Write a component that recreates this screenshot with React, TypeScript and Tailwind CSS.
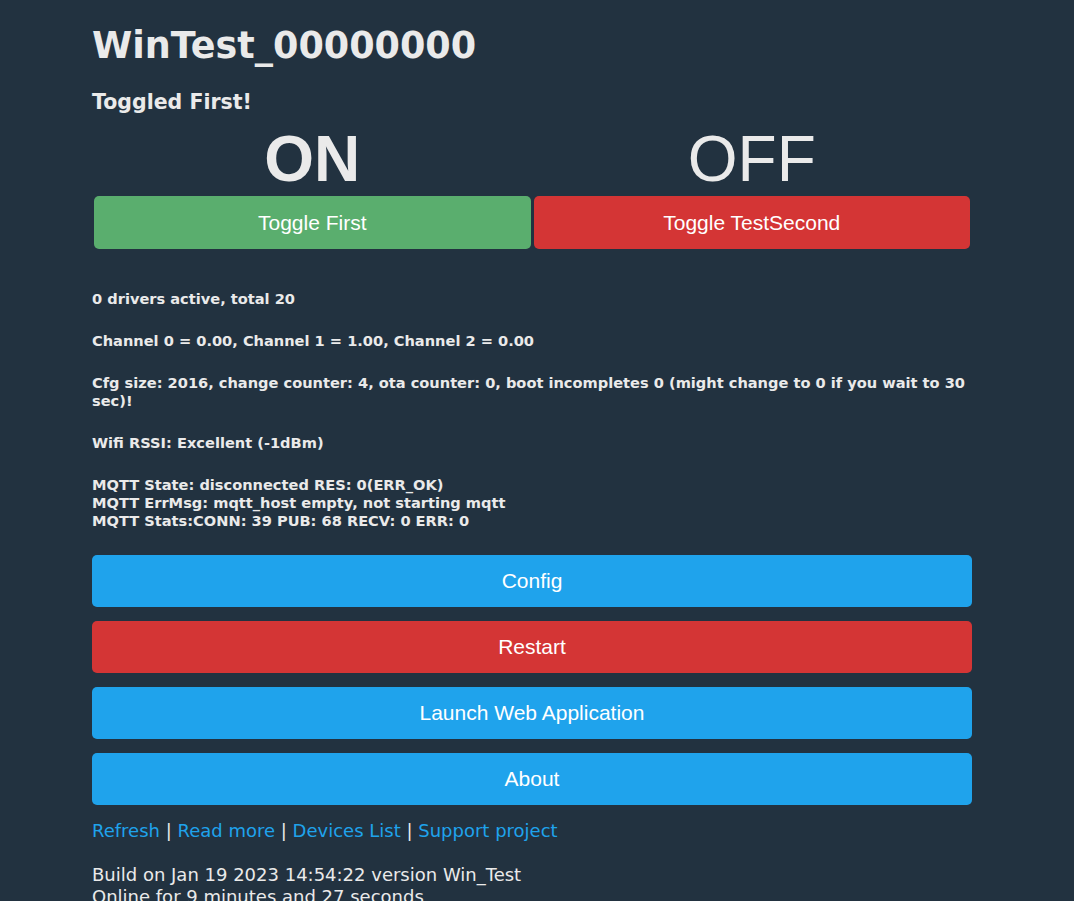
import React from "react";

const VERDANA = "font-['DejaVu_Sans',Verdana,sans-serif]";
const ARIAL = "font-['Liberation_Sans',Arial,sans-serif]";

function BigButton({ label, tone }: { label: string; tone: "blue" | "red" }) {
  return (
    <button
      type="button"
      className={`${ARIAL} flex h-[52px] w-full items-center justify-center rounded-[5px] text-[21px] text-white ${
        tone === "blue" ? "bg-[#1fa3ec]" : "bg-[#d43535]"
      }`}
    >
      {label}
    </button>
  );
}

export default function App() {
  return (
    <div className={`${VERDANA} min-h-screen bg-[#223240] text-[#eaeaea]`}>
      <div className="ml-[92px] w-[880px] pt-[24px]">
        <h1 className="text-[36.5px] leading-[44px] font-bold">WinTest_00000000</h1>

        <h3 className="mt-[22px] text-[20.5px] leading-[24px] font-bold">Toggled First!</h3>

        <div className="mt-[11px] grid grid-cols-2 gap-[3px] px-[2px]">
          <div className={`${ARIAL} text-center text-[64px] leading-[68px] font-bold`}>ON</div>
          <div className={`${ARIAL} text-center text-[64px] leading-[68px]`}>OFF</div>
          <button
            type="button"
            className={`${ARIAL} flex h-[53px] items-center justify-center rounded-[5px] bg-[#5aae6e] text-[21px] text-white`}
          >
            Toggle First
          </button>
          <button
            type="button"
            className={`${ARIAL} flex h-[53px] items-center justify-center rounded-[5px] bg-[#d43535] text-[21px] text-white`}
          >
            Toggle TestSecond
          </button>
        </div>

        <div className="mt-[41px] flex flex-col gap-[24px] text-[14.6px] leading-[18px] font-bold">
          <p>0 drivers active, total 20</p>
          <p>Channel 0 = 0.00, Channel 1 = 1.00, Channel 2 = 0.00</p>
          <p>
            Cfg size: 2016, change counter: 4, ota counter: 0, boot incompletes 0 (might change to 0 if you
            wait to 30 sec)!
          </p>
          <p>Wifi RSSI: Excellent (-1dBm)</p>
          <p>
            MQTT State: disconnected RES: 0(ERR_OK)
            <br />
            MQTT ErrMsg: mqtt_host empty, not starting mqtt
            <br />
            MQTT Stats:CONN: 39 PUB: 68 RECV: 0 ERR: 0
          </p>
        </div>

        <div className="mt-[25px] flex flex-col gap-[14px]">
          <BigButton label="Config" tone="blue" />
          <BigButton label="Restart" tone="red" />
          <BigButton label="Launch Web Application" tone="blue" />
          <BigButton label="About" tone="blue" />
        </div>

        <div className="mt-[15px] text-[18px] leading-[22px]">
          <a className="text-[#1fa3ec]">Refresh</a> | <a className="text-[#1fa3ec]">Read more</a> |{" "}
          <a className="text-[#1fa3ec]">Devices List</a> | <a className="text-[#1fa3ec]">Support project</a>
        </div>

        <div className="mt-[22px] text-[18px] leading-[22px]">
          Build on Jan 19 2023 14:54:22 version Win_Test
          <br />
          Online for 9 minutes and 27 seconds
        </div>
      </div>
    </div>
  );
}
